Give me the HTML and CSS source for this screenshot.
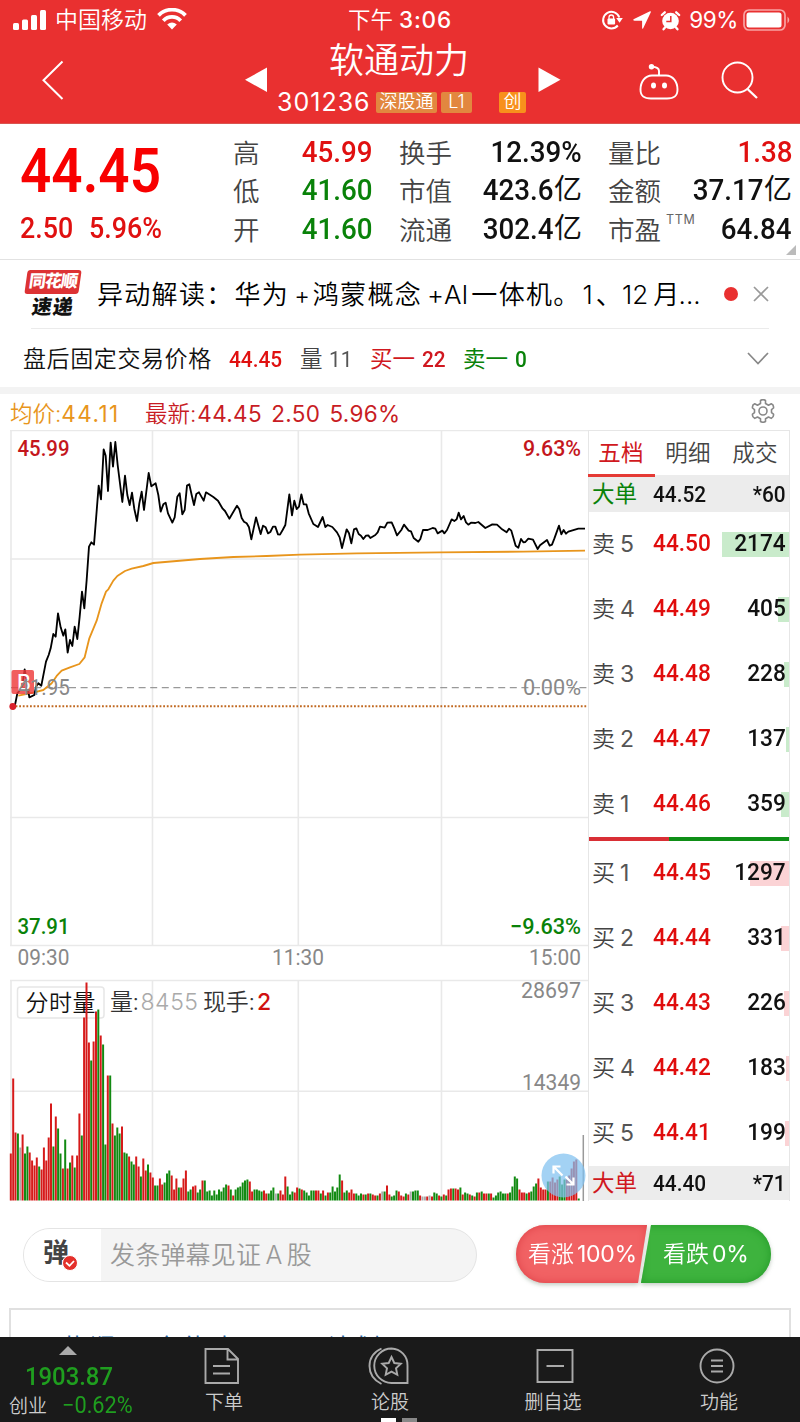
FILE: index.html
```html
<!DOCTYPE html>
<html lang="zh-CN">
<head>
<meta charset="utf-8">
<title>软通动力 301236</title>
<link rel="stylesheet" href="styles.css">
</head>
<body>
<header class="top">
  <div class="status">
    <div class="status-left">
      <svg width="34" height="20" viewBox="0 0 34 20" fill="#fff"><rect x="0" y="13" width="6" height="7" rx="1.5"/><rect x="9" y="9.500" width="6" height="10.500" rx="1.500"/><rect x="18" y="5" width="6" height="15" rx="1.500"/><rect x="27" y="0" width="6" height="20" rx="1.500"/></svg>
      <span class="carrier">中国移动</span>
      <svg class="wifi" width="30" height="22" viewBox="0 0 30 22" fill="none" stroke="#fff" stroke-width="3.8"><path d="M1.500 7.300A19 19 0 0 1 28.500 7.300"/><path d="M6.300 12.700A12 12 0 0 1 23.700 12.700"/><path d="M15 21.500 10.200 16.600Q15 12.600 19.800 16.600Z" fill="#fff" stroke="none"/></svg>
    </div>
    <span class="clock">下午<b>3:06</b></span>
    <div class="status-right">
      <svg width="22" height="22" viewBox="0 0 22 22" fill="none" stroke="#fff" stroke-width="2"><path d="M16.800 16.500A8.300 8.300 0 1 1 18.300 8.500"/><path d="M15.200 9h6.600l-3.200 4.800z" fill="#fff" stroke="none"/><rect x="6.500" y="9.500" width="7.600" height="6" rx="1" fill="#fff" stroke="none"/><path d="M8 10V8.300a2.300 2.300 0 0 1 4.600 0V10" stroke-width="1.300"/></svg>
      <svg class="loc" width="20" height="20" viewBox="0 0 20 20" fill="#fff"><path d="M1.500 9.200 18 1.300Q19.200 1 18.800 2.200L11.200 18.300Q10.300 19.500 10.100 18V10.700H2.500Q.500 10.300 1.500 9.200Z"/></svg>
      <svg class="alarm" width="21" height="21" viewBox="0 0 21 21"><circle cx="10.500" cy="11" r="8.300" fill="#fff"/><path d="M1.800 5 4.800 2.300M19.200 5 16.200 2.300M5 17.500l-1.500 1.800M16 17.500l1.500 1.800" stroke="#fff" stroke-width="2.300" stroke-linecap="round"/><path d="M10.800 6v5.600H6.300" fill="none" stroke="#e93030" stroke-width="1.500"/></svg>
      <span class="percent">99%</span>
      <svg width="48" height="22" viewBox="0 0 48 22"><rect x="1" y="1" width="41" height="20" rx="5" fill="none" stroke="#f8a3a3" stroke-width="1.700"/><rect x="3.500" y="3.500" width="35" height="15" rx="2.500" fill="#fff"/><path d="M44.500 7.500q3.500 3.500 0 7z" fill="#f8a3a3"/></svg>
    </div>
  </div>
  <div class="titlebar">
    <svg class="back" width="24" height="42" viewBox="0 0 24 42" fill="none" stroke="#fff" stroke-width="2"><path d="M20.500 2.500 1.500 21.200 20.500 40"/></svg>
    <svg class="prev" width="23" height="26" viewBox="0 0 23 26"><path d="M22 .500V25L0 12.800Z" fill="#fff"/></svg>
    <div class="heading">
      <h1>软通动力</h1>
      <div class="codes"><span class="code">301236</span><span class="tag tag-wide">深股通</span><span class="tag tag-l1">L1</span><span class="tag tag-new">创</span></div>
    </div>
    <svg class="next" width="23" height="26" viewBox="0 0 23 26"><path d="M.500 .500V25L22.500 12.800Z" fill="#fff"/></svg>
    <svg class="robot" width="40" height="38" viewBox="0 0 40 38" fill="none" stroke="#fff" stroke-width="1.900"><path d="M13 12.500H27C34 12.500 38.500 19 38.500 26.500 38.500 34 34 35.500 28 35.500H12C6 35.500 1.500 34 1.500 26.500 1.500 19 6 12.500 13 12.500Z"/><path d="M20 12.500V8Q20 4 13 3.700"/><circle cx="12.500" cy="3.800" r="2.700" fill="#fff" stroke="none"/><ellipse cx="14.500" cy="22.500" rx="2.500" ry="3" fill="#fff" stroke="none"/><ellipse cx="25.500" cy="22.500" rx="2.500" ry="3" fill="#fff" stroke="none"/></svg>
    <svg class="search" width="38" height="38" viewBox="0 0 38 38" fill="none" stroke="#fff" stroke-width="1.900"><circle cx="16.500" cy="16.500" r="15"/><path d="m26.500 28 9.500 9" stroke-width="2.300"/></svg>
  </div>
</header>

<section class="quote">
  <div class="last">
    <div class="price num">44.45</div>
    <div class="change"><span class="num">2.50</span><span class="num">5.96%</span></div>
  </div>
  <dl class="stats">
    <dt>高</dt><dd class="red"><span class="num">45.99</span></dd><dt>换手</dt><dd><span class="num">12.39%</span></dd><dt>量比</dt><dd class="red"><span class="num">1.38</span></dd>
    <dt>低</dt><dd class="green"><span class="num">41.60</span></dd><dt>市值</dt><dd><span class="num">423.6</span><i>亿</i></dd><dt>金额</dt><dd><span class="num">37.17</span><i>亿</i></dd>
    <dt>开</dt><dd class="green"><span class="num">41.60</span></dd><dt>流通</dt><dd><span class="num">302.4</span><i>亿</i></dd><dt>市盈<sup>TTM</sup></dt><dd><span class="num">64.84</span></dd>
  </dl>
  <b class="corner"></b>
</section>

<section class="news">
  <div class="brand"><span class="brand-top">同花顺</span><span class="brand-bottom">速递</span></div>
  <p>异动解读：<span class="n1">华为</span><span class="n2">+</span>鸿蒙概念<span class="n3">+AI</span>一体机。<span class="n4">1</span>、<span class="n5">12</span>月<span class="n6">...</span></p>
  <b class="dot"></b>
  <svg class="close" width="16" height="16" viewBox="0 0 16 16" stroke="#999" stroke-width="1.700"><path d="m1 1 14 14M15 1 1 15"/></svg>
</section>

<section class="after">
  <span class="a-title">盘后固定交易价格</span><span class="num red a-price">44.45</span>
  <span class="a-vol">量</span><span class="num a-grey">11</span>
  <span class="a-buy">买一</span><span class="num a-buyn">22</span>
  <span class="a-sell">卖一</span><span class="num green">0</span>
  <svg class="chevron" width="22" height="13" viewBox="0 0 22 13" fill="none" stroke="#888" stroke-width="1.700"><path d="m1 1 10 10.500L21 1"/></svg>
</section>

<section class="legend">
  <span class="avg">均价:<em>44.11</em></span><span class="latest">最新:<em>44.45</em> <em>2.50</em> <em>5.96%</em></span>
  <svg class="gear" width="24" height="24" viewBox="0 0 24 24" fill="none" stroke="#888" stroke-width="1.600" stroke-linejoin="round"><path d="M9.500 1.500Q12 -.200 14.500 1.500V4.500L17.500 6.200 20.300 4.800Q23 6 22.500 9L20.500 10.600V13.600L22.500 15.200Q23 18 20.300 19.400L17.500 18 14.500 19.700V22.500Q12 24 9.500 22.500V19.700L6.500 18 3.700 19.400Q1 18 1.500 15.200L3.500 13.600V10.600L1.500 9Q1 6 3.700 4.800L6.500 6.200 9.500 4.500Z"/><circle cx="12" cy="12" r="4"/></svg>
</section>

<main class="board">
  <svg class="chart" width="588" height="771" viewBox="0 430 588 771">
    <g class="grid">
      <path d="M11 430V945.500M152.500 430V945.500M298.300 430V945.500M441.500 430V945.500M10 430.500H588M10 559H588M10 817.500H588M10 945.500H588"/>
      <path d="M11 980V1201M152.500 980V1201M298.300 980V1201M441.500 980V1201M10 980.500H588M10 1091.300H588"/>
    </g>
    <path class="zero" d="M11 687.700H587"/>
    <path class="open" d="M12 706.200H587"/>
    <g transform="translate(0 390) scale(.33333)" fill="none" stroke-linejoin="round">
      <polyline class="avg-line" points="55,917 100,908 130,900 155,880 170,858 185,842 210,832 238,822 254,802 268,745 290,692 305,640 318,605 325,598 340,572 352,558 375,543 395,536 430,528 460,519 600,507 700,501 800,498 900,494 1070,490 1320,487 1570,485 1755,482"/>
      <polyline class="price-line" points="38,957 45,945 52,910 60,900 68,880 74,838 80,870 88,922 103,915 108,890 115,880 124,887 138,815 146,795 152,775 160,732 167,740 174,670 182,712 190,737 196,718 203,788 210,750 217,768 224,710 232,747 239,680 246,605 253,655 260,570 267,470 274,457 282,464 296,287 303,328 311,178 317,197 324,303 332,158 339,230 346,156 353,225 367,336 375,257 382,315 389,345 396,308 403,357 411,393 418,340 425,305 432,360 446,249 454,289 467,280 475,315 482,365 490,343 497,338 504,370 517,398 524,382 532,320 539,310 547,373 554,360 561,287 568,283 575,315 582,345 589,312 597,307 611,332 618,307 632,316 640,321 654,332 668,356 675,363 688,386 711,347 718,358 725,384 732,395 740,400 747,412 754,448 768,382 782,432 789,407 797,412 804,430 811,426 819,410 826,410 834,433 840,434 848,420 856,405 868,313 876,376 883,332 890,357 897,350 904,313 911,343 919,343 926,370 940,402 954,411 968,381 976,411 983,405 997,411 1011,427 1019,442 1026,474 1040,418 1047,430 1054,460 1062,418 1069,415 1076,432 1083,437 1090,447 1098,437 1105,436 1111,444 1126,435 1133,427 1140,410 1154,413 1162,398 1175,397 1183,415 1191,436 1204,420 1212,404 1226,422 1233,424 1241,444 1255,455 1261,447 1269,420 1283,420 1298,414 1306,416 1313,430 1327,422 1333,430 1341,420 1355,388 1363,393 1370,388 1376,368 1383,388 1391,378 1398,397 1405,404 1413,398 1426,399 1435,396 1456,414 1477,403 1491,404 1504,416 1520,427 1527,416 1534,422 1547,467 1555,473 1563,447 1570,457 1576,456 1585,446 1599,449 1613,477 1620,466 1641,450 1649,467 1656,464 1663,446 1677,407 1684,433 1691,420 1698,431 1705,425 1735,416 1755,416"/>
    </g>
    <rect x="11.500" y="670" width="22.500" height="24" rx="2" fill="#ee3b3b" fill-opacity=".82"/>
    <text x="17" y="690" class="marker">B</text>
    <circle cx="12.800" cy="706.500" r="3.400" fill="#d9202c"/>
    <g class="axis">
      <text x="17.500" y="455.500" textLength="52" lengthAdjust="spacingAndGlyphs" class="up">45.99</text>
      <text x="523" y="455.500" textLength="58" lengthAdjust="spacingAndGlyphs" class="up">9.63%</text>
      <text x="18" y="695" textLength="52" lengthAdjust="spacingAndGlyphs">41.95</text>
      <text x="523" y="695" textLength="58" lengthAdjust="spacingAndGlyphs">0.00%</text>
      <text x="17.500" y="934.300" textLength="52" lengthAdjust="spacingAndGlyphs" class="down">37.91</text>
      <text x="510" y="934.300" textLength="71" lengthAdjust="spacingAndGlyphs" class="down">−9.63%</text>
      <text x="17.500" y="965.300" textLength="52" lengthAdjust="spacingAndGlyphs">09:30</text>
      <text x="272" y="965.300" textLength="52" lengthAdjust="spacingAndGlyphs">11:30</text>
      <text x="529" y="965.300" textLength="52" lengthAdjust="spacingAndGlyphs">15:00</text>
      <text x="521" y="998.200" textLength="60" lengthAdjust="spacingAndGlyphs">28697</text>
      <text x="522" y="1090" textLength="59" lengthAdjust="spacingAndGlyphs">14349</text>
    </g>
    <rect x="17.500" y="987" width="86.500" height="31" rx="3" fill="#fff" stroke="#e6e6e6" stroke-width="1.500"/>
    <g class="volume-title">
      <text x="25.500" y="1011" textLength="70" class="name">分时量</text>
      <text x="110" y="1009.500" textLength="29">量:</text>
      <text x="140.500" y="1009.500" textLength="57.500" class="total">8455</text>
      <text x="203" y="1009.500" textLength="52">现手:</text>
      <text x="257" y="1009.500" class="hand">2</text>
    </g>
    <g id="volume"></g>
    <path d="M583.300 1135V1201" stroke="#999" stroke-width="1.500"/>
    <circle cx="563.500" cy="1175.500" r="22" fill="#7fc0f0" fill-opacity=".72"/>
    <path d="M560.500 1166.500H553.500V1173.500M554 1167 562.500 1175.500M573.500 1177.500V1184.500H566.500M573 1184 565.500 1176.500" fill="none" stroke="#fff" stroke-width="2.200"/>
  </svg>

  <div class="book">
    <div class="tabs"><span class="active">五档</span><span>明细</span><span>成交</span></div>
    <div class="big"><span class="green">大单</span><span class="num">44.52</span><span class="num qty">*60</span></div>
    <div class="level"><span>卖<em>5</em></span><b class="num">44.50</b><div class="amount sell w5"><b class="num">2174</b></div></div>
    <div class="level"><span>卖<em>4</em></span><b class="num">44.49</b><div class="amount sell w4"><b class="num">405</b></div></div>
    <div class="level"><span>卖<em>3</em></span><b class="num">44.48</b><div class="amount sell w3"><b class="num">228</b></div></div>
    <div class="level"><span>卖<em>2</em></span><b class="num">44.47</b><div class="amount sell w2"><b class="num">137</b></div></div>
    <div class="level"><span>卖<em>1</em></span><b class="num">44.46</b><div class="amount sell w1"><b class="num">359</b></div></div>
    <div class="ratio"></div>
    <div class="level"><span>买<em>1</em></span><b class="num">44.45</b><div class="amount buy x1"><b class="num">1297</b></div></div>
    <div class="level"><span>买<em>2</em></span><b class="num">44.44</b><div class="amount buy w1"><b class="num">331</b></div></div>
    <div class="level"><span>买<em>3</em></span><b class="num">44.43</b><div class="amount buy w3"><b class="num">226</b></div></div>
    <div class="level"><span>买<em>4</em></span><b class="num">44.42</b><div class="amount buy x4"><b class="num">183</b></div></div>
    <div class="level"><span>买<em>5</em></span><b class="num">44.41</b><div class="amount buy x5"><b class="num">199</b></div></div>
    <div class="big foot"><span class="darkred">大单</span><span class="num">44.40</span><span class="num qty">*71</span></div>
  </div>
</main>

<section class="talk">
  <div class="pill">
    <div class="pill-icon"><b>弹</b><svg width="16" height="16" viewBox="0 0 16 16"><circle cx="8" cy="8" r="7.500" fill="#e4302b" stroke="#fff"/><path d="m4 7.500 3.500 3.300L12 6" fill="none" stroke="#fff" stroke-width="1.800"/></svg></div>
    <span class="placeholder">发条弹幕见证 A 股</span>
  </div>
  <div class="votes"><div class="vote-up">看涨<span>100%</span></div><div class="vote-down">看跌<span>0%</span></div></div>
</section>

<section class="card"><span>同花顺 · 全能中国 AI 计划</span></section>

<nav class="bottom">
  <div class="index">
    <b class="tri"></b>
    <span class="num idx">1903.87</span>
    <div class="idx-row"><span>创业</span><span class="num">−0.62%</span></div>
  </div>
  <div class="item i1"><svg width="36" height="36" viewBox="0 0 36 36"><path d="M1.500 1H24L34 11V35H1.500ZM23.500 1V11.500H34M9 18H26M9 25.500H26"/></svg><span>下单</span></div>
  <div class="item i2"><svg width="42" height="38" viewBox="0 0 42 38"><path d="M23.500 1.500A17.200 17.200 0 0 0 23.500 36H39.500V18.500A16.500 16.500 0 0 0 23.500 1.500Z"/><path d="M13.500 1.500Q1.500 7 1.500 19T13.500 37"/><path d="m23.500 10 2.800 6 6.500.800-4.800 4.500 1.300 6.500-5.800-3.200-5.800 3.200 1.300-6.500-4.800-4.500 6.500-.800Z"/></svg><span>论股</span></div>
  <div class="item i3"><svg width="38" height="36" viewBox="0 0 38 36"><path d="M1.500 2H36.500V34H1.500ZM10.500 18H28"/></svg><span>删自选</span></div>
  <div class="item i4"><svg width="36" height="36" viewBox="0 0 36 36"><circle cx="18" cy="18" r="16.500"/><path d="M12 12.500H24M12 18H24M12 23.500H24"/></svg><span>功能</span></div>
  <div class="pager"><b></b><b></b></div>
</nav>
<script src="volume.js"></script>
</body>
</html>
```

FILE: styles.css
```css
* { box-sizing: border-box; }
body { margin: 0; width: 800px; height: 1422px; overflow: hidden; background: #fff; color: #111; font-family: Inter, "Noto Sans CJK SC", sans-serif; font-weight: 350; }
svg { display: block; flex: none; }
em, i { font-style: normal; }
h1, p, dl, dd { margin: 0; }
.num { display: inline-block; font-family: Roboto, "Noto Sans CJK SC", sans-serif; font-weight: 500; transform: scaleX(.925); transform-origin: left; white-space: nowrap; }
.red { color: #e01010; }
.green { color: #098209; }
.darkred { color: #d01820; }

.top { height: 124px; background: #e93030; color: #fff; border-bottom: 1px solid #d9544f; }
.status { height: 40px; display: grid; grid-template-columns: 340px 120px 340px; align-items: center; line-height: 40px; }
.status-left, .status-right { display: flex; align-items: center; }
.status-left { padding-left: 13px; }
.status-left svg { margin-top: -1px; }
.carrier { font-size: 23px; margin-left: 8px; width: 102px; }
.status-left .wifi { margin-top: -3px; }
.clock { text-align: center; font-size: 22.500px; white-space: nowrap; }
.clock b { font-weight: 500; letter-spacing: .9px; margin-left: 6px; }
.status-right { justify-content: flex-end; padding-right: 9px; }
.loc { margin-left: 9px; }
.alarm { margin-left: 8px; }
.percent { font-size: 22.5px; font-weight: 400; margin: 0 5px 0 8px; letter-spacing: -.4px; }
.titlebar { display: flex; align-items: flex-start; height: 83px; }
.back { margin: 19px 0 0 42px; }
.prev { margin: 27px 0 0 179px; }
.heading { width: 270px; text-align: center; }
h1 { font-size: 35px; font-weight: 350; line-height: 40px; padding-right: 8px; }
.codes { display: flex; align-items: center; height: 24px; margin: 10px 0 0 8px; line-height: 24px; }
.code { font-size: 25px; width: 99px; text-align: left; font-weight: 400; letter-spacing: 1px; padding-left: 1px; margin-right: 1px; line-height: 26px; }
.tag { height: 21px; line-height: 20px; font-size: 18px; border-radius: 2px; background: #e2873f; }
.tag-wide { width: 61px; }
.tag-l1 { width: 31px; margin-left: 4px; }
.tag-new { width: 27px; margin-left: 27px; background: #f8901c; }
.next { margin-top: 27px; }
.robot { margin: 23px 0 0 78px; }
.search { margin: 21px 0 0 42px; }

.quote { position: relative; display: flex; height: 136px; border-bottom: 1px solid #e2e2e2; padding-top: 8.500px; }
.last { width: 233px; padding-left: 20px; color: #e01010; }
.price { display: block; font-size: 62px; line-height: 76px; color: #f80000; font-weight: 600; transform: scaleX(.885); }
.change { font-size: 29px; line-height: 38px; display: flex; gap: 11px; }
.stats { display: grid; grid-template-columns: 52px 88px 78px 131px 78px 132px; grid-template-rows: repeat(3, 38.500px); line-height: 38px; font-size: 26.500px; }
.stats dt:nth-of-type(3n + 2) { padding-left: 26px; }
.stats dt:nth-of-type(3n) { padding-left: 26px; position: relative; }
.stats dt { color: #444; white-space: nowrap; line-height: 41px; }
.stats dd { font-size: 30px; text-align: right; white-space: nowrap; display: flex; justify-content: flex-end; }
.stats dd .num { transform-origin: right; }
.stats dd i { font-size: 28px; font-weight: 400; line-height: 37px; }
.stats sup { position: absolute; left: 84px; top: -11px; font-size: 12.500px; letter-spacing: .7px; font-weight: 400; color: #666; }
.corner { position: absolute; right: 4px; bottom: 4px; border: 5px solid; border-color: transparent #bbb #bbb transparent; }

.news { height: 69px; display: flex; align-items: center; border-bottom: 1.500px solid #ebebeb; margin: 0 31px; }
.brand { width: 57px; margin: 2px 0 0 -7px; height: 50px; display: flex; flex-direction: column; align-items: center; font-weight: 900; }
.brand span { transform: skewX(-8deg); white-space: nowrap; }
.brand-top { width: 54px; height: 24px; line-height: 23px; font-size: 17px; letter-spacing: -1px; text-align: center; background: #dd3234; color: #fff; border-radius: 3px; }
.brand-bottom { font-size: 20px; line-height: 26px; letter-spacing: 1px; }
.news p { margin-left: 16px; width: 623px; font-size: 26px; letter-spacing: 1.300px; white-space: nowrap; line-height: 40px; color: #000; padding-top: 3px; }
.n2 { margin: 0 3px 0 5px; font-size: 24px; letter-spacing: 0; }
.n3, .n4, .n5 { font-size: 26px; letter-spacing: 0; }
.n3 { margin: 0 3px 0 5px; }
.n4 { margin: 0 3px 0 2px; }
.n5 { margin: 0 5px 0 -1px; }
.n1 { margin-left: 1px; }
.n6 { letter-spacing: 0; margin-left: -2px; }
.dot { width: 14px; height: 14px; border-radius: 50%; background: #e93030; margin-left: 4px; }
.close { margin-left: 15px; }

.after { height: 57px; padding: 0 31px 0 23px; display: flex; align-items: center; line-height: 56px; font-size: 22.500px; white-space: nowrap; margin-top: 1px; }
.a-title { font-size: 23px; letter-spacing: .6px; width: 206px; }
.a-price { width: 71px; }
.a-vol { width: 29px; color: #444; }
.after .a-grey { width: 41px; color: #555; font-weight: 400; }
.a-buy { width: 52px; color: #d01820; }
.a-buyn { width: 41px; color: #d01820; }
.a-sell { width: 52px; color: #098209; }
.a-buy, .a-sell { font-weight: 400; }
.chevron { margin-left: auto; }

.legend { height: 43px; border-top: 7px solid #f3f3f3; padding: 3px 25px 0 10px; display: flex; align-items: center; font-size: 22.500px; line-height: 36px; }
.legend em { font-weight: 400; }
.avg { width: 135px; color: #e8951c; }
.avg em { letter-spacing: 1.400px; }
.latest { color: #c81c24; }
.latest em { letter-spacing: .3px; margin-left: 1px; }
.latest em + em { margin-left: 3px; }
.gear { margin: -5px 0 0 auto; }

.board { display: flex; height: 771px; }
.grid path { fill: none; stroke: #e9e9e9; stroke-width: 1.600; }
.zero { stroke: #999; stroke-width: 1.300; stroke-dasharray: 7 4.600; }
.open { stroke: #c06820; stroke-width: 2; stroke-dasharray: 1.800 1.800; }
.price-line { stroke: #000; stroke-width: 5.500; }
.avg-line { stroke: #e8951c; stroke-width: 5.500; }
.axis text { font: 400 22.500px Roboto, sans-serif; fill: #888; }
.axis .up { fill: #c4161c; font-weight: 500; }
.axis .down { fill: #098209; font-weight: 500; }
.marker { font: 500 21px Inter, sans-serif; fill: #fff; }
.volume-title text { font-size: 23px; fill: #333; }
.volume-title .name { fill: #111; }
.volume-title .total { fill: #aaa; }
.volume-title .hand { fill: #d01010; font-weight: 500; }
.vr { stroke: #d61a1a; }
.vg { stroke: #128a12; }
.vn { stroke: #aaa; }

.book { width: 202px; border: 1px solid #e6e6e6; border-width: 1px 1px 0; }
.tabs { height: 44px; display: flex; line-height: 43px; font-size: 22.500px; color: #444; }
.tabs span { width: 67px; text-align: center; letter-spacing: .3px; margin-left: -1px; padding-right: 1px; }
.tabs span + span { margin-left: 0; }
.tabs .active { color: #d01820; font-weight: 400; border-bottom: 3px solid #e53a35; height: 46px; position: relative; }
.big { display: flex; align-items: center; height: 37px; background: #ececec; font-size: 22.500px; line-height: 37px; padding: 0 3px 0 3px; }
.big > span:first-child { width: 61px; font-weight: 400; }
.big .num { margin-top: 1px; }
.big .qty { margin-left: auto; transform-origin: right; }
.foot { height: 34px; line-height: 32px; }
.foot .num { margin-top: -1px; }
.level { height: 65px; display: flex; align-items: center; padding-left: 3px; font-size: 23px; line-height: 60px; color: #444; }
.level > span { width: 61px; margin-top: -2px; }
.level > span em { margin-left: 5px; font-weight: 400; color: #555; }
.level .num { font-size: 24.500px; color: #e00c0c; line-height: 61px; margin-top: -4px; }
.amount { height: 25px; margin-left: auto; display: flex; justify-content: flex-end; align-items: center; padding-right: 3px; }
.amount .num { transform-origin: right; color: #111; margin: -5px 0 0; }
.sell { background: #c9ebcb; }
.buy { background: #fbd3d5; }
.w5 { width: 67px; } .w4 { width: 11px; } .w3 { width: 5px; } .w2 { width: 3px; } .w1 { width: 8px; }
.x1 { width: 39px; } .x4 { width: 3px; } .x5 { width: 4px; }
.ratio { height: 4px; background: linear-gradient(90deg, #d92f35 40%, #0f8f17 40%); }

.talk { height: 107px; display: flex; padding: 24px 29px 0 23px; justify-content: space-between; }
.pill { width: 454px; height: 54px; margin-top: 3px; border: 1.500px solid #e4e4e4; border-radius: 27px; background: #f4f4f4; display: flex; overflow: hidden; }
.pill-icon { width: 77px; background: #fff; position: relative; padding-left: 19px; line-height: 48px; font-size: 26px; color: #444; }
.pill-icon b { font-weight: 700; }
.pill-icon svg { position: absolute; left: 38px; top: 26px; }
.placeholder { margin-left: 9px; font-size: 25px; line-height: 52px; color: #999; word-spacing: -3px; letter-spacing: .2px; }
.votes { display: flex; width: 255px; height: 58px; color: #fff; font-size: 23px; line-height: 59px; white-space: nowrap; filter: drop-shadow(0 2px 2px rgba(60, 90, 60, .3)); }
.votes span { font-weight: 400; margin-left: 3px; letter-spacing: -.3px; }
.vote-up { width: 131px; padding-left: 12px; background: #f16264; border-radius: 29px 0 0 29px; clip-path: polygon(0 0, 100% 0, 122px 100%, 0 100%); box-shadow: inset 0 0 9px #df4248; }
.vote-down { width: 130px; margin-left: -6px; padding-left: 22px; background: #3eb33e; border-radius: 0 29px 29px 0; clip-path: polygon(10px 0, 100% 0, 100% 100%, 0 100%); box-shadow: inset 0 0 9px #239a28; }

.card { height: 29px; margin: 0 9px; border: 2px solid #e0e0e0; border-bottom: 0; overflow: hidden; color: #2a6aa8; font-size: 24px; font-weight: 400; }
.card span { display: block; padding: 18px 0 0 21px; line-height: 40px; white-space: nowrap; letter-spacing: 5px; }

.bottom { position: relative; height: 85px; background: #1a1a1a; color: #ccc; display: flex; font-size: 19px; line-height: 26px; }
.index { width: 142px; padding-top: 9px; color: #1f9e1f; }
.tri { display: block; width: 0; border: 9px solid transparent; border-top: 0; border-bottom: 9px solid #aaa; margin-left: 59px; }
.index .idx { display: block; font-size: 26.500px; line-height: 30px; margin: 6px 0 0 25px; font-weight: 500; transform: scaleX(.9); }
.idx-row { display: flex; padding-left: 9px; line-height: 28px; margin-top: 1px; }
.idx-row span:first-child { color: #ccc; width: 53px; line-height: 29px; }
.idx-row .num { font-size: 23px; font-weight: 400; transform: scaleX(.945); }
.item { position: absolute; top: 10px; width: 100px; display: flex; flex-direction: column; align-items: center; }
.item svg { height: 38px; fill: none; stroke: #aaa; stroke-width: 1.900; }
.item span { margin-top: 5px; }
.i1 { left: 174px; } .i2 { left: 340px; } .i3 { left: 503px; } .i4 { left: 669px; }
.i1 svg, .i4 svg { margin-right: 4px; }
.i2 svg { margin-right: 2px; }
.i3 svg { margin-left: 3px; }
.pager { position: absolute; left: 381px; bottom: 0; display: flex; gap: 6px; }
.pager b { width: 15px; height: 4px; background: #fff; }
.pager b + b { background: #888; }
```

FILE: volume.js
```js
// Minute volumes in chart pixels: r = rising, g = falling, n = unchanged.
const minutes = `47r 122r 68r 67g 53n 66r 47g 54g 48r 40r 35r 43r 34g 31r 53r 40r 63r 97r 54g 84r 72g 47g 32r 61g 32r 38g 45r 33g 45r 87r
65g 183r 218r 158r 140g 159r 189r 191g 165r 156g 56g 125r 125g 77r 65g 73g 67g 74r 48g 47g 44r 39g 36g 44r 34r 24g 42r 30r 36g 28r
23r 15g 15g 22r 16r 18g 27g 30g 25r 11r 22r 13g 13r 22r 30r 9g 11g 14r 15r 8g 11g 20r 20g 9g 10g 5g 10g 6g 11g 9g
13g 16g 15r 11g 5r 11g 13g 14g 18g 20g 21g 19r 9r 11g 11g 10g 9g 10r 7r 7g 10g 13g 7n 7g 10r 6r 24r 14g 6g 9g
8r 13r 12g 11r 10g 8g 5g 10g 10g 10r 10r 7g 10r 5g 8r 8g 14g 9g 13g 26g 20r 8g 10g 8r 11r 7r 7g 5g 7g 6r
6g 7r 7g 6r 5r 5g 7r 9n 9g 15r 6r 4g 5g 10g 9r 5r 4r 7g 6r 9n 9g 10g 10g 5r 4n 4n 4r 5n 4r 8g
7g 5r 4g 6r 5g 11r 12r 12g 12r 11r 13g 6r 8g 7g 6r 5g 4r 8g 8r 9g 7r 7r 7g 7r 3g 5g 8g 9g 7g 7g
7r 8g 14g 24g 22g 11r 8r 8r 7g 8r 9g 14g 17g 22r 13r 11r 11r 19g 19r 23r 18r 21r 24g 16g 21g 21r 25r 32r 39r 41r 2g`.split(/\s+/);

const layer = document.getElementById("volume");
minutes.forEach((entry, i) => {
  const bar = document.createElementNS("http://www.w3.org/2000/svg", "path");
  const x = (10.8 + i * 565.5 / (minutes.length - 2)).toFixed(1);
  bar.setAttribute("d", `M${x} 1200.500v-${parseInt(entry, 10)}`);
  bar.setAttribute("class", "v" + entry.slice(-1));
  bar.setAttribute("stroke-width", "2");
  layer.appendChild(bar);
});
```
